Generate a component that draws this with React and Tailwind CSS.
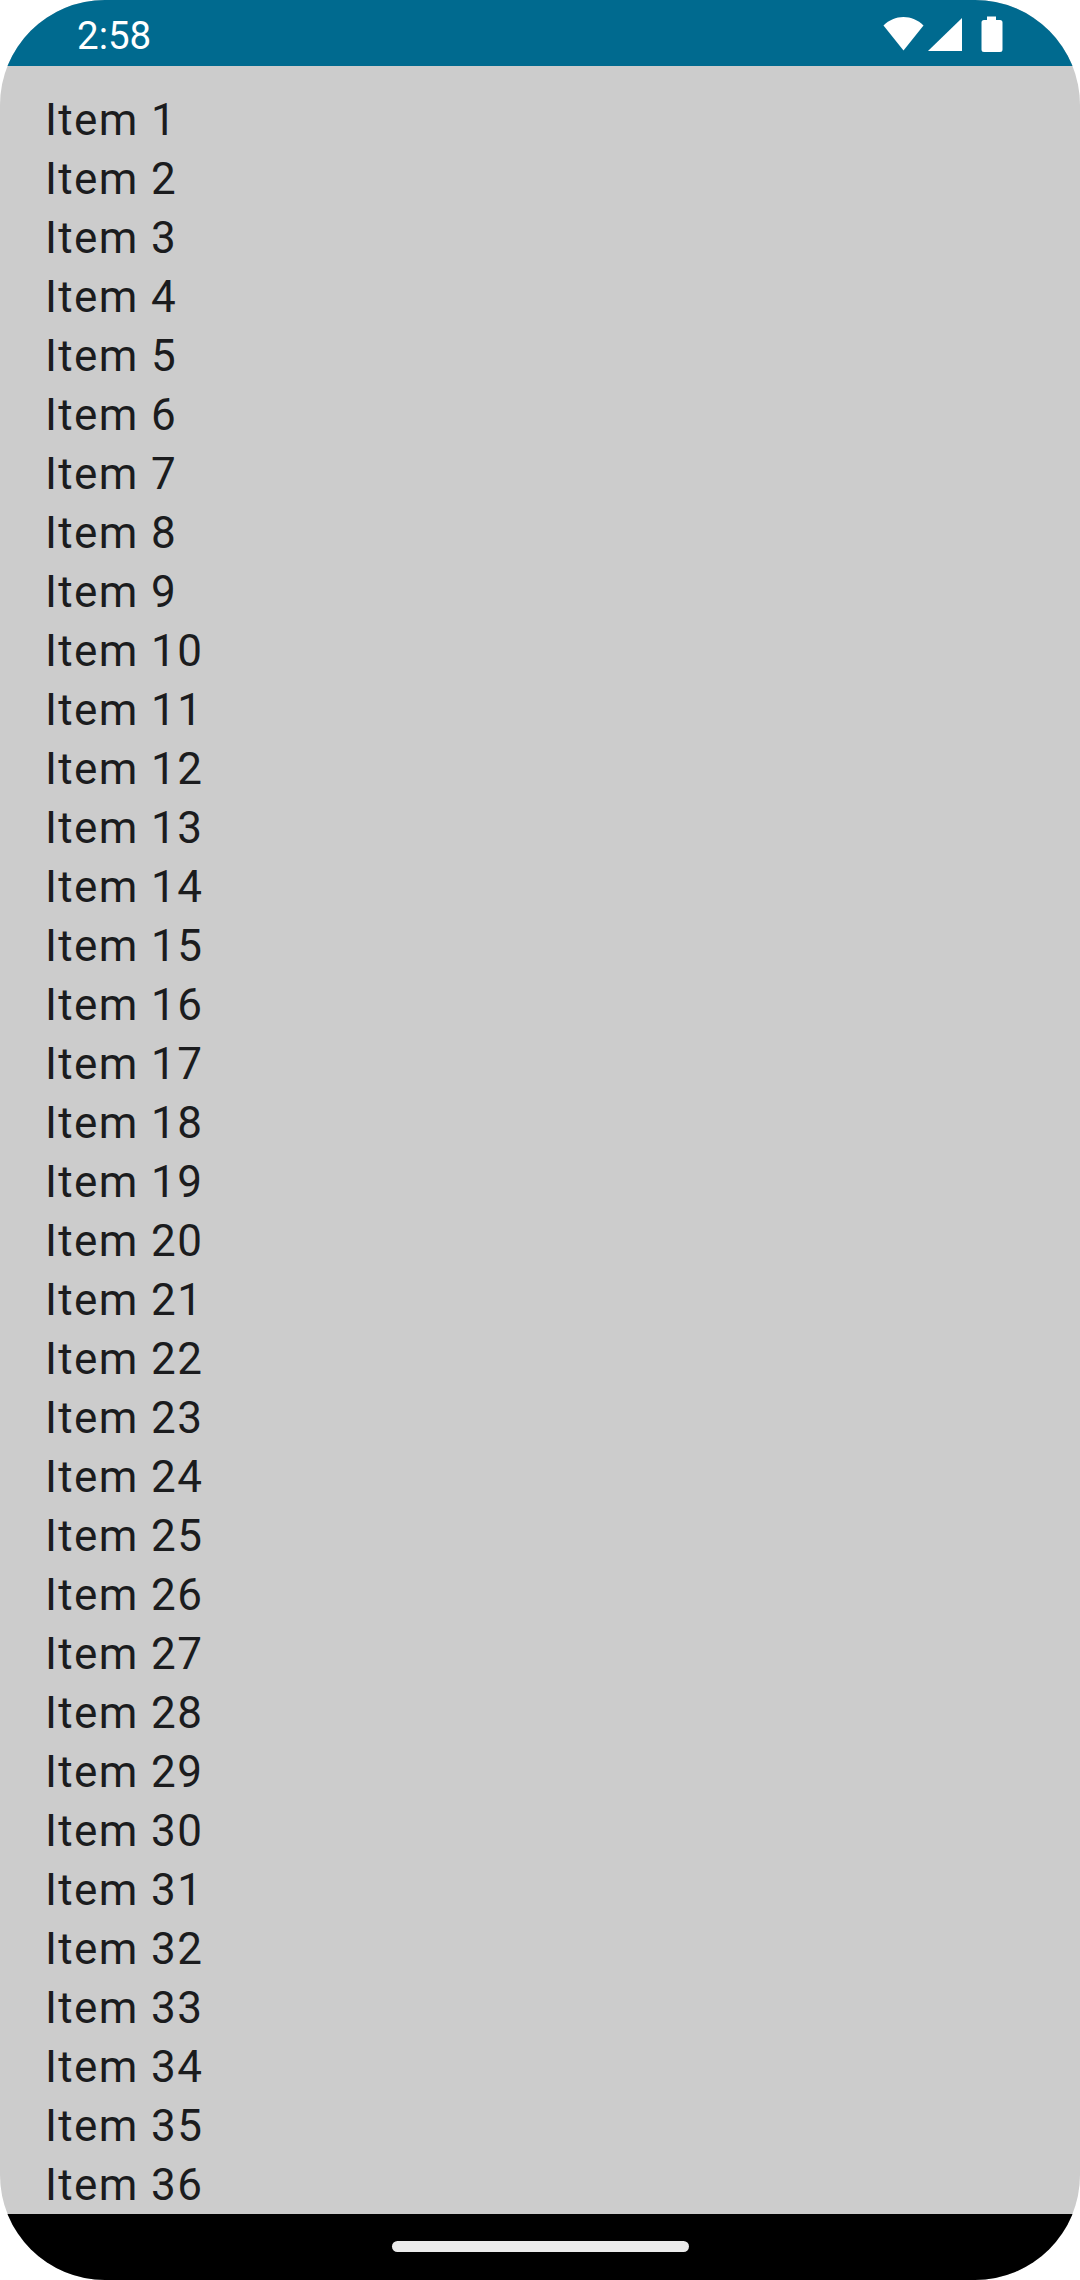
const items = Array.from({ length: 36 }, (_, i) => `Item ${i + 1}`)

const StatusBar = () => (
  <div className="h-[66px] shrink-0 bg-[#006a8f] flex items-center justify-between pl-[77px] pr-[77px]">
    <span className="text-white text-[38.5px] leading-[66px] pt-[6px] font-['Roboto',sans-serif]">2:58</span>
    <div className="flex items-center">
      {/* wifi */}
      <svg width="42" height="36" viewBox="0 0 42 36" className="mt-[2px]">
        <path d="M0.5 9.5 C6 4 13 1 20.5 1 C28 1 35 4 40.5 9.5 L20.5 34.5 Z" fill="#fff" />
      </svg>
      {/* signal */}
      <svg width="35" height="35" viewBox="0 0 35 35" className="ml-[3px] mt-[3px]">
        <path d="M0 34 L34 1 L34 34 Z" fill="#fff" />
      </svg>
      {/* battery */}
      <svg width="22" height="38" viewBox="0 0 22 38" className="ml-[18px] mt-[4px]">
        <path d="M6 0.5 H15 V4 H19 Q21.5 4 21.5 6.5 V33.5 Q21.5 36 19 36 H3 Q0.5 36 0.5 33.5 V6.5 Q0.5 4 3 4 H6 Z" fill="#fff" />
      </svg>
    </div>
  </div>
)

const App = () => {
  return (
    <div className="w-[1080px] h-[2280px] bg-white">
      <div className="w-full h-full rounded-[105px] overflow-hidden flex flex-col bg-[#cccccc]">
        <StatusBar />
        <div className="flex-1 pt-[25px] pl-[45px] overflow-hidden rounded-[30px]">
          {items.map((item) => (
            <div
              key={item}
              className="h-[59px] leading-[59px] text-[44px] tracking-[1.375px] text-[#1b1c1e] font-['Roboto',sans-serif]"
            >
              {item}
            </div>
          ))}
        </div>
        <div className="h-[66px] shrink-0 bg-black flex justify-center pt-[27px]">
          <div className="w-[297px] h-[11px] rounded-full bg-[#ebebeb]" />
        </div>
      </div>
    </div>
  )
}

export default App
